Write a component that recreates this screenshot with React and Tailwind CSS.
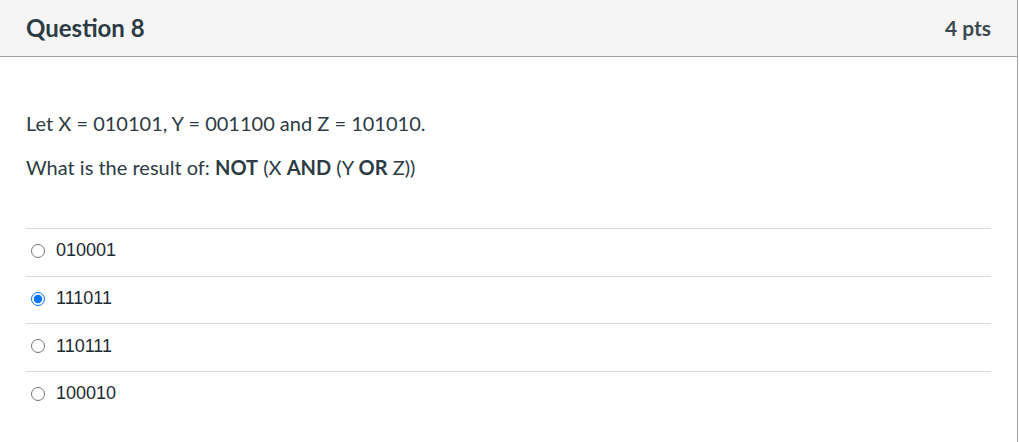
export default function App() {
  const answers = ["010001", "111011", "110111", "100010"];

  return (
    <div className="w-[1018px] h-[442px] bg-white border-r border-[#a5a5a5] text-[#2d3b45]" style={{ fontFamily: "Lato, 'Noto Sans', sans-serif" }}>
      <div className="h-[57px] bg-[#f5f5f5] border-b border-[#a5a5a5] flex items-center justify-between px-[26px]">
        <h2 className="text-[24px] font-bold">Question 8</h2>
        <span className="text-[21px] font-bold text-[#3d4a52]">4 pts</span>
      </div>

      <div className="px-[26px] pt-[52px]">
        <p className="text-[20px] leading-[28px]">
          Let X = 010101, Y = 001100 and Z = 101010.
        </p>
        <p className="text-[20px] leading-[28px] mt-[16px]">
          What is the result of: <b>NOT</b> (X <b>AND</b> (Y <b>OR</b> Z))
        </p>

        <div className="mt-[47px] w-[965px]">
          {answers.map((a, i) => (
            <label
              key={a}
              className="flex items-center h-[47.7px] pb-[3px] border-t border-[#dcdcdc]"
            >
              <input
                type="radio"
                name="q8"
                defaultChecked={i === 1}
                className="m-0 ml-[5px] w-[14px] h-[14px]"
              />
              <span
                className="ml-[11px] text-[18px] text-[#1d2a33]"
                style={{ fontFamily: "'Liberation Sans', Arial, sans-serif" }}
              >
                {a}
              </span>
            </label>
          ))}
        </div>
      </div>
    </div>
  );
}
